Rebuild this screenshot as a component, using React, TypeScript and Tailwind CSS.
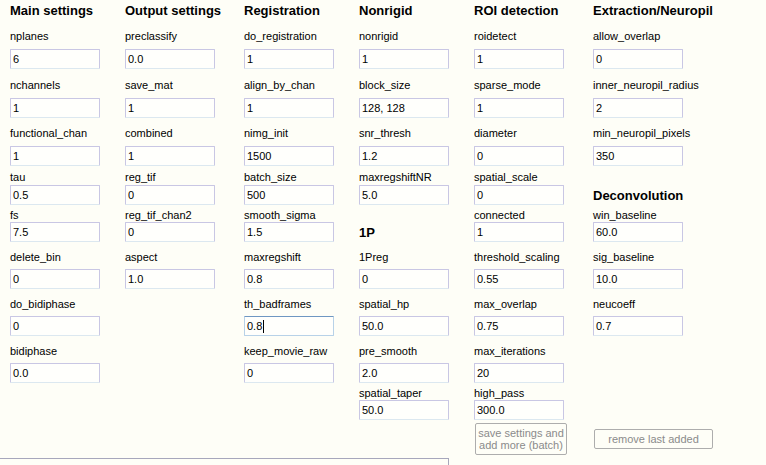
type Cell =
  | { kind: 'field'; label: string; value: string; focused?: boolean }
  | { kind: 'heading'; text: string }
  | { kind: 'empty' };

type Column = { title: string; rows: Cell[]; button?: 'batch' | 'remove' };

const f = (label: string, value: string, focused = false): Cell => ({ kind: 'field', label, value, focused });
const h = (text: string): Cell => ({ kind: 'heading', text });
const e: Cell = { kind: 'empty' };

const columns: Column[] = [
  {
    title: 'Main settings',
    rows: [
      f('nplanes', '6'),
      f('nchannels', '1'),
      f('functional_chan', '1'),
      f('tau', '0.5'),
      f('fs', '7.5'),
      f('delete_bin', '0'),
      f('do_bidiphase', '0'),
      f('bidiphase', '0.0'),
      e,
    ],
  },
  {
    title: 'Output settings',
    rows: [
      f('preclassify', '0.0'),
      f('save_mat', '1'),
      f('combined', '1'),
      f('reg_tif', '0'),
      f('reg_tif_chan2', '0'),
      f('aspect', '1.0'),
      e,
      e,
      e,
    ],
  },
  {
    title: 'Registration',
    rows: [
      f('do_registration', '1'),
      f('align_by_chan', '1'),
      f('nimg_init', '1500'),
      f('batch_size', '500'),
      f('smooth_sigma', '1.5'),
      f('maxregshift', '0.8'),
      f('th_badframes', '0.8', true),
      f('keep_movie_raw', '0'),
      e,
    ],
  },
  {
    title: 'Nonrigid',
    rows: [
      f('nonrigid', '1'),
      f('block_size', '128, 128'),
      f('snr_thresh', '1.2'),
      f('maxregshiftNR', '5.0'),
      h('1P'),
      f('1Preg', '0'),
      f('spatial_hp', '50.0'),
      f('pre_smooth', '2.0'),
      f('spatial_taper', '50.0'),
    ],
  },
  {
    title: 'ROI detection',
    rows: [
      f('roidetect', '1'),
      f('sparse_mode', '1'),
      f('diameter', '0'),
      f('spatial_scale', '0'),
      f('connected', '1'),
      f('threshold_scaling', '0.55'),
      f('max_overlap', '0.75'),
      f('max_iterations', '20'),
      f('high_pass', '300.0'),
    ],
    button: 'batch',
  },
  {
    title: 'Extraction/Neuropil',
    rows: [
      f('allow_overlap', '0'),
      f('inner_neuropil_radius', '2'),
      f('min_neuropil_pixels', '350'),
      h('Deconvolution'),
      f('win_baseline', '60.0'),
      f('sig_baseline', '10.0'),
      f('neucoeff', '0.7'),
      e,
      e,
    ],
    button: 'remove',
  },
];

function LineEdit({ value, focused }: { value: string; focused?: boolean }) {
  return (
    <div
      className={
        focused
          ? 'flex h-[20px] w-[90px] items-center rounded-[1px] border border-[#b8d2e8] border-t-[#6f97c2] bg-[#fffffc] px-[2px] text-[11px] text-black'
          : 'flex h-[20px] w-[90px] items-center rounded-[1px] border border-[#c9c7e4] border-b-[#dce8f0] bg-[#fffffc] px-[2px] text-[11px] text-black'
      }
    >
      <span className="whitespace-pre">{value}</span>
      {focused && <span className="ml-px h-[13px] w-px bg-black" />}
    </div>
  );
}

function ColumnCells({ col }: { col: Column }) {
  return (
    <>
      <div className="flex items-center whitespace-nowrap pt-px text-[13px] font-bold">{col.title}</div>
      {col.rows.map((cell, i) => {
        if (cell.kind === 'field') {
          return [
            <div key={`l${i}`} className="flex items-center whitespace-nowrap pt-[3px] text-[11px]">
              {cell.label}
            </div>,
            <div key={`v${i}`} className="flex items-center">
              <LineEdit value={cell.value} focused={cell.focused} />
            </div>,
          ];
        }
        if (cell.kind === 'heading') {
          return [
            <div key={`l${i}`} />,
            <div key={`v${i}`} className="flex items-center whitespace-nowrap pt-px text-[13px] font-bold">
              {cell.text}
            </div>,
          ];
        }
        return [<div key={`l${i}`} />, <div key={`v${i}`} />];
      })}
      <div className="flex items-center">
        {col.button === 'batch' && (
          <button
            type="button"
            disabled
            className="ml-px flex h-[32px] w-[92px] flex-col items-center justify-center rounded-[2px] border border-[#adadad] text-[11px] leading-[12px] text-[#8b8b8b]"
          >
            <span>save settings and</span>
            <span>add more (batch)</span>
          </button>
        )}
        {col.button === 'remove' && (
          <button
            type="button"
            disabled
            className="ml-px flex h-[20px] w-[119px] items-center justify-center rounded-[2px] border border-[#adadad] text-[11px] text-[#8b8b8b]"
          >
            remove last added
          </button>
        )}
      </div>
    </>
  );
}

export default function App() {
  return (
    <div className="h-[465px] w-[766px] overflow-hidden bg-[#fefef7] font-['Liberation_Sans',Arial,sans-serif] text-black">
      <div className="grid grid-flow-col grid-cols-[115px_119px_115px_115px_119px_1fr] grid-rows-[20px_29px_20px_29px_20px_28px_20px_19px_20px_17px_20px_27px_20px_27px_20px_27px_20px_17px_20px_38px] pl-[10px]">
        {columns.map((col) => (
          <ColumnCells key={col.title} col={col} />
        ))}
      </div>
      <div className="h-[10px] w-[449px] border-r border-t border-[#a7a7bc]" />
    </div>
  );
}
